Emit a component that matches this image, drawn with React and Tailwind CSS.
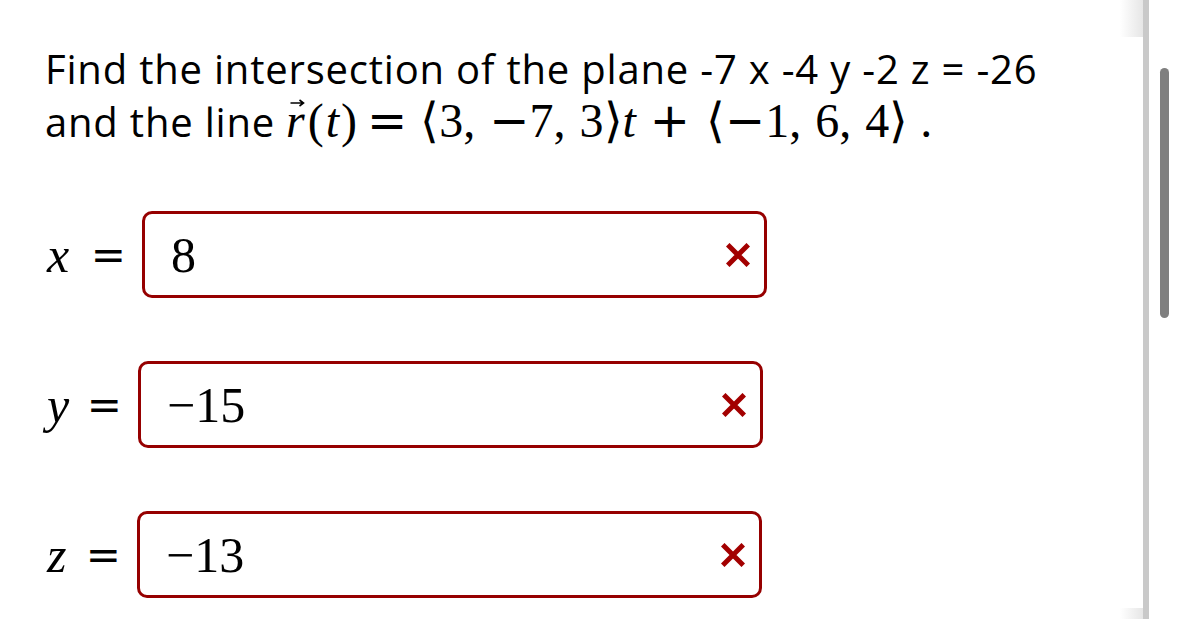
import React from "react";

const SANS = "font-['Open_Sans',sans-serif]";
const SERIF = "font-['Liberation_Serif',serif]";
const OP = "font-['DejaVu_Sans',sans-serif]";

function XMark() {
  return (
    <svg width="24" height="24" viewBox="0 0 24 24" className="shrink-0">
      <path d="M3.5 3.5 L20.5 20.5 M20.5 3.5 L3.5 20.5" stroke="#a30000" strokeWidth="5" strokeLinecap="square" fill="none" />
    </svg>
  );
}

function Row({ label, value, labelW }) {
  return (
    <div className="flex items-center">
      <div className={`flex items-center justify-between pl-[2px] pr-[16px] ${labelW}`}>
        <span className={`${SERIF} italic text-[50px] leading-none`}>{label}</span>
        <span className={`${OP} text-[42px] leading-none`}>=</span>
      </div>
      <div className="w-[625px] h-[87px] border-[3px] border-[#960000] rounded-[10px] flex items-center justify-between pl-[26px] pr-[14px]">
        <span className={`${SERIF} text-[50px] leading-none text-black`}>{value}</span>
        <XMark />
      </div>
    </div>
  );
}

function Sp({ w }) {
  return <span className={`inline-block ${w}`} />;
}

export default function App() {
  return (
    <div className="w-[1179px] h-[619px] bg-white flex overflow-hidden text-black">
      <div className="flex-1 pl-[45px] pt-[42px]">
        <p className={`${SANS} text-[40px] tracking-[0.8px] leading-[53px] h-[53px] whitespace-nowrap`}>
          Find the intersection of the plane -7 x -4 y -2 z = -26
        </p>
        <p className={`${SANS} text-[40px] tracking-[0.8px] leading-[53px] h-[53px] whitespace-nowrap`}>
          <span>and the line</span>
          <span className={`${SERIF} text-[48px] leading-none tracking-normal whitespace-nowrap ml-[11px]`}>
            <span className="relative inline-block italic mr-[3px]">
              r
              <svg className="absolute left-[4px] top-[2px]" width="15" height="8" viewBox="0 0 15 8">
                <path d="M0.5 4 H13 M9.5 1 L13.5 4 L9.5 7" stroke="black" strokeWidth="1.6" fill="none" />
              </svg>
            </span>
            <span>(</span>
            <span className="italic mx-[2px]">t</span>
            <span>)</span>
            <span className={`${OP} ml-[10px] mr-[13px]`}>=</span>
            <span>⟨</span>
            <span>3,</span>
            <Sp w="w-[14px]" />
            <span className={OP}>−</span>
            <span>7,</span>
            <Sp w="w-[14px]" />
            <span>3</span>
            <span>⟩</span>
            <span className="italic">t</span>
            <span className={`${OP} ml-[14px] mr-[16px]`}>+</span>
            <span>⟨</span>
            <span className={OP}>−</span>
            <span>1,</span>
            <Sp w="w-[14px]" />
            <span>6,</span>
            <Sp w="w-[14px]" />
            <span>4</span>
            <span>⟩</span>
            <span className="ml-[12px]">.</span>
          </span>
        </p>
        <div className="mt-[63px] flex flex-col gap-[63px]">
          <Row label="x" value="8" labelW="w-[97px]" />
          <Row label="y" value="−15" labelW="w-[93px]" />
          <Row label="z" value="−13" labelW="w-[92px]" />
        </div>
      </div>
      <div className="w-[23px] flex flex-col justify-between">
        <div className="h-[37px] bg-gradient-to-r from-white to-[#e6e6e6]" />
        <div className="h-[11px] bg-gradient-to-r from-white to-[#e6e6e6]" />
      </div>
      <div className="w-[6px] bg-[#c9c9c9]" />
      <div className="w-[30px] pt-[68px] pl-[11px]">
        <div className="w-[9px] h-[250px] rounded-full bg-[#7f7f7f]" />
      </div>
    </div>
  );
}
